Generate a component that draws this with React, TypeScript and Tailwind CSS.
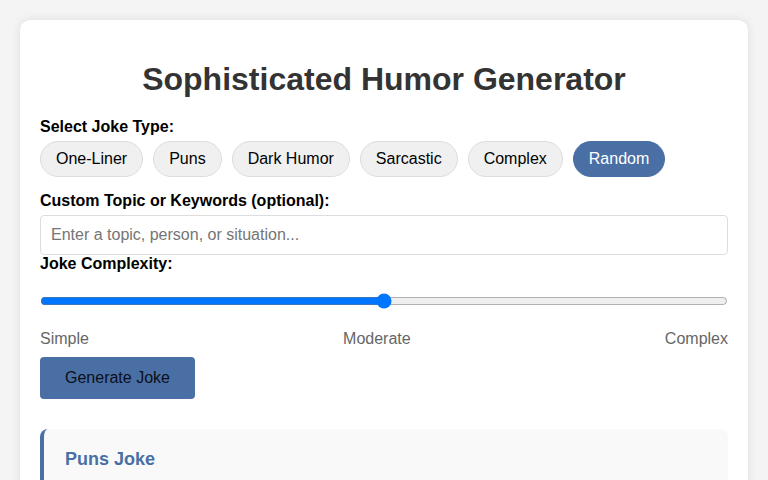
import React, { useState } from "react";

const jokeTypes = ["One-Liner", "Puns", "Dark Humor", "Sarcastic", "Complex", "Random"];

export default function App() {
  const [active, setActive] = useState("Random");
  const [level, setLevel] = useState(3);

  return (
    <div className="min-h-screen bg-[#f4f4f4] p-5 font-['Liberation_Sans',Arial,sans-serif] text-[#333]">
      <div className="rounded-[10px] bg-white p-5 shadow-[0_0_10px_rgba(0,0,0,0.1)]">
        <h1 className="mt-[21px] mb-5 text-center text-[32px] font-bold leading-[37px] text-[#333]">
          Sophisticated Humor Generator
        </h1>

        <label className="mb-[5px] block text-base font-bold leading-[18px] text-black">Select Joke Type:</label>
        <div className="mb-[15px] flex flex-wrap gap-[10px]">
          {jokeTypes.map((t) => (
            <button
              key={t}
              onClick={() => setActive(t)}
              className={
                t === active
                  ? "h-9 rounded-[20px] border border-[#4a6fa5] bg-[#4a6fa5] px-[15px] text-base text-white"
                  : "h-9 rounded-[20px] border border-[#ddd] bg-[#f0f0f0] px-[15px] text-base text-black"
              }
            >
              {t}
            </button>
          ))}
        </div>

        <label className="mb-[5px] block text-base font-bold leading-[18px] text-black">
          Custom Topic or Keywords (optional):
        </label>
        <input
          type="text"
          placeholder="Enter a topic, person, or situation..."
          className="block h-10 w-full rounded-[4px] border border-[#ddd] px-[10px] text-base text-black placeholder:text-[#757575] outline-none"
        />

        <label className="mb-[5px] block text-base font-bold leading-[18px] text-black">Joke Complexity:</label>
        <div className="flex h-[46px] items-center">
          <input
            type="range"
            min={1}
            max={5}
            value={level}
            onChange={(e) => setLevel(Number(e.target.value))}
            className="m-0 w-full"
          />
        </div>
        <div className="mt-[6px] flex justify-between text-base leading-[18px] text-[#666]">
          <span>Simple</span>
          <span>Moderate</span>
          <span>Complex</span>
        </div>

        <button className="mt-[9px] h-[42px] rounded-[4px] bg-[#4a6fa5] px-[25px] text-base text-[#0b0f1a]">
          Generate Joke
        </button>

        <div className="mt-[30px] rounded-[8px] border-l-4 border-[#4a6fa5] bg-[#f9f9f9] pt-5 pr-5 pb-10 pl-[21px]">
          <h3 className="text-lg font-bold leading-[21px] text-[#4a6fa5]">Puns Joke</h3>
        </div>
      </div>
    </div>
  );
}
